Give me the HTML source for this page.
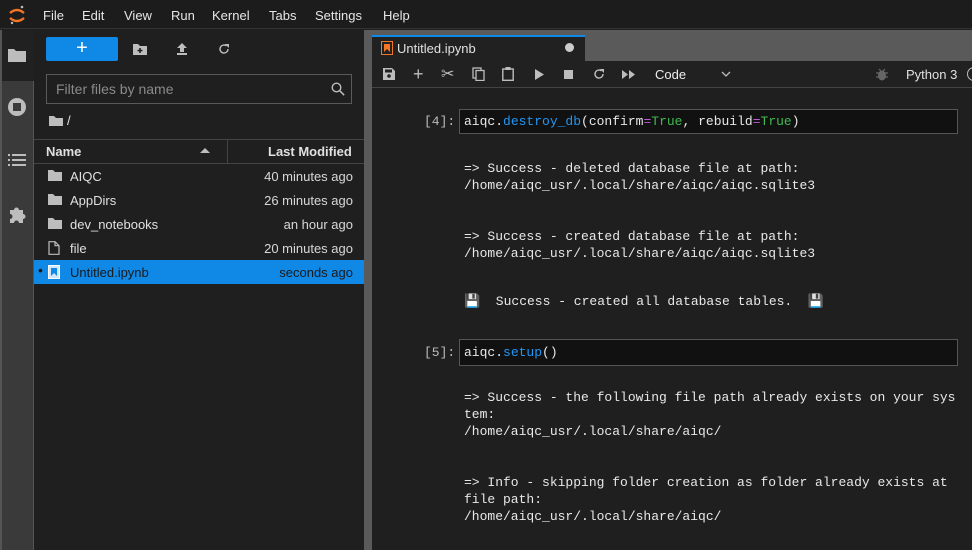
<!DOCTYPE html>
<html><head><style>
*{margin:0;padding:0;box-sizing:border-box}
body{width:972px;height:550px;overflow:hidden;background:#1f1f1f;font-family:"Liberation Sans",sans-serif;color:#e0e0e0;position:relative;font-size:13px}
.a{position:absolute}
.mono{font-family:"Liberation Mono",monospace;font-size:13px;white-space:pre;color:#e8e8e8}
.menu span{position:absolute;top:8px;font-size:13px;color:#e6e6e6}
.row{position:absolute;left:34px;width:330px;height:24px;font-size:13px}
.row .n{position:absolute;left:36px;top:5px}
.row .d{position:absolute;right:11px;top:5px;color:#d8d8d8}
.row svg{position:absolute;left:14px;top:5px}
.kw{color:#2196f3}.g{color:#3fb950}.p{color:#bb5bd6}
</style></head><body>
<!-- menu bar -->
<div class="a" style="left:0;top:0;width:972px;height:29px;background:#1c1c1c;border-bottom:1px solid #333"></div>
<svg class="a" style="left:8px;top:4px" width="18" height="22" viewBox="0 0 18 22"><path d="M2 9 Q9 3 16 9" stroke="#f37626" stroke-width="2.4" fill="none"/><path d="M2 14 Q9 20 16 14" stroke="#f37626" stroke-width="2.4" fill="none"/><circle cx="14" cy="3" r="1.3" fill="#bbb"/><circle cx="4" cy="19" r="1.2" fill="#bbb"/></svg>
<div class="menu"><span style="left:43px">File</span><span style="left:82px">Edit</span><span style="left:124px">View</span><span style="left:171px">Run</span><span style="left:212px">Kernel</span><span style="left:269px">Tabs</span><span style="left:315px">Settings</span><span style="left:383px">Help</span></div>
<!-- left sidebar -->
<div class="a" style="left:0;top:30px;width:34px;height:520px;background:#3a3a3a;border-left:2px solid #555;border-right:1px solid #555"></div>
<div class="a" style="left:2px;top:30px;width:32px;height:51px;background:#212121"></div>
<svg class="a" style="left:8px;top:47px" width="18" height="15"><path d="M0 2h6l2 2h10v11H0z" fill="#bdbdbd"/></svg>
<svg class="a" style="left:7px;top:97px" width="20" height="20"><circle cx="10" cy="10" r="9" fill="#bdbdbd"/><rect x="6" y="6" width="8" height="8" fill="#3a3a3a"/></svg>
<svg class="a" style="left:8px;top:153px" width="18" height="14"><g fill="#bdbdbd"><rect x="0" y="1" width="2" height="2"/><rect x="4" y="1" width="14" height="2"/><rect x="0" y="6" width="2" height="2"/><rect x="4" y="6" width="14" height="2"/><rect x="0" y="11" width="2" height="2"/><rect x="4" y="11" width="14" height="2"/></g></svg>
<svg class="a" style="left:8px;top:205px" width="18" height="18"><path d="M2 5h4a2.5 2.5 0 1 1 5 0h4v4a2.5 2.5 0 1 1 0 5v4H11a2.5 2.5 0 1 0-5 0H2v-4a2.5 2.5 0 1 0 0-5z" fill="#bdbdbd"/></svg>
<!-- file panel -->
<div class="a" style="left:46px;top:37px;width:72px;height:24px;background:#1088e6;border-radius:2px;color:#fff;font-size:20px;text-align:center;line-height:23px">+</div>
<svg class="a" style="left:133px;top:43px" width="14" height="12"><path d="M0 1h5l2 2h7v9H0z" fill="#bdbdbd"/><path d="M7 5v5M4.5 7.5h5" stroke="#1f1f1f" stroke-width="1.6"/></svg>
<svg class="a" style="left:176px;top:43px" width="12" height="12"><path d="M6 0L1 5h3v4h4V5h3z M1 10h10v2H1z" fill="#bdbdbd"/></svg>
<svg class="a" style="left:218px;top:43px" width="12" height="12"><path d="M10 6a4 4 0 1 1-1.5-3.1" stroke="#bdbdbd" stroke-width="1.4" fill="none"/><path d="M7 1h4v4z" fill="#bdbdbd"/></svg>
<div class="a" style="left:46px;top:74px;width:306px;height:30px;border:1px solid #5a5a5a"></div>
<div class="a" style="left:56px;top:81px;font-size:14px;color:#8a8a8a">Filter files by name</div>
<svg class="a" style="left:331px;top:82px" width="14" height="14"><circle cx="5.5" cy="5.5" r="4.3" stroke="#bdbdbd" stroke-width="1.4" fill="none"/><path d="M8.7 8.7l4.5 4.5" stroke="#bdbdbd" stroke-width="1.5"/></svg>
<svg class="a" style="left:49px;top:115px" width="14" height="11"><path d="M0 1h5l2 2h7v8H0z" fill="#bdbdbd"/></svg>
<div class="a" style="left:67px;top:113px;font-size:13px">/</div>
<div class="a" style="left:34px;top:139px;width:330px;height:25px;border-top:1px solid #444;border-bottom:1px solid #444"></div>
<div class="a" style="left:227px;top:139px;width:1px;height:25px;background:#444"></div>
<div class="a" style="left:46px;top:144px;font-weight:bold;font-size:13px">Name</div>
<svg class="a" style="left:200px;top:148px" width="10" height="6"><path d="M0 5L5 0l5 5z" fill="#bdbdbd"/></svg>
<div class="a" style="left:268px;top:144px;font-weight:bold;font-size:13px">Last Modified</div>
<div class="row" style="top:164px"><svg width="14" height="12"><path d="M0 1h5l2 2h7v9H0z" fill="#bdbdbd"/></svg><span class="n">AIQC</span><span class="d">40 minutes ago</span></div>
<div class="row" style="top:188px"><svg width="14" height="12"><path d="M0 1h5l2 2h7v9H0z" fill="#bdbdbd"/></svg><span class="n">AppDirs</span><span class="d">26 minutes ago</span></div>
<div class="row" style="top:212px"><svg width="14" height="12"><path d="M0 1h5l2 2h7v9H0z" fill="#bdbdbd"/></svg><span class="n">dev_notebooks</span><span class="d">an hour ago</span></div>
<div class="row" style="top:236px"><svg width="12" height="14"><path d="M1 .7h6l4 4v8.6H1z M7 .7v4h4" stroke="#bdbdbd" stroke-width="1.2" fill="none"/></svg><span class="n">file</span><span class="d">20 minutes ago</span></div>
<div class="row" style="top:260px;background:#1088e6;color:#1a1a1a"><span class="a" style="left:4px;top:2px;font-size:14px">•</span><svg width="12" height="14"><rect x=".5" y=".5" width="11" height="13" fill="#cfe6fb" stroke="#fff"/><path d="M3 3h6v8L6 8l-3 3z" fill="#1088e6"/></svg><span class="n">Untitled.ipynb</span><span class="d" style="color:#1a1a1a">seconds ago</span></div>
<!-- splitter -->
<div class="a" style="left:364px;top:30px;width:8px;height:520px;background:#5a5a5a"></div>
<!-- tab bar -->
<div class="a" style="left:372px;top:30px;width:600px;height:31px;background:#5a5a5a"></div>
<div class="a" style="left:372px;top:35px;width:213px;height:27px;background:#212121;border-top:2px solid #1088e6"></div>
<svg class="a" style="left:381px;top:41px" width="12" height="14"><rect x=".5" y=".5" width="11" height="13" fill="none" stroke="#f37626"/><path d="M3 3h6v8L6 8l-3 3z" fill="#f37626"/></svg>
<div class="a" style="left:397px;top:41px;font-size:13px">Untitled.ipynb</div>
<div class="a" style="left:565px;top:43px;width:9px;height:9px;border-radius:50%;background:#ccc"></div>
<!-- toolbar -->
<div class="a" style="left:372px;top:61px;width:600px;height:27px;background:#212121;border-bottom:1px solid #444"></div>
<svg class="a" style="left:383px;top:68px" width="12" height="12"><path d="M0 0h9l3 3v9H0z" fill="#bdbdbd"/><rect x="2" y="1.5" width="7" height="3" fill="#212121"/><circle cx="6" cy="8" r="1.8" fill="#212121"/></svg>
<div class="a" style="left:413px;top:64px;font-size:18px;color:#bdbdbd">+</div>
<div class="a" style="left:441px;top:64px;font-size:16px;color:#bdbdbd">✂</div>
<svg class="a" style="left:472px;top:67px" width="13" height="14"><rect x="1" y="1" width="8" height="10" fill="none" stroke="#bdbdbd" stroke-width="1.3"/><rect x="4" y="3.5" width="8" height="10" fill="#212121" stroke="#bdbdbd" stroke-width="1.3"/></svg>
<svg class="a" style="left:502px;top:67px" width="12" height="14"><rect x=".8" y="2" width="10.4" height="11.3" fill="none" stroke="#bdbdbd" stroke-width="1.4"/><rect x="3.5" y="0" width="5" height="3" fill="#bdbdbd"/></svg>
<svg class="a" style="left:535px;top:69px" width="9" height="11"><path d="M0 0l9 5.5L0 11z" fill="#bdbdbd"/></svg>
<div class="a" style="left:564px;top:70px;width:9px;height:9px;background:#bdbdbd"></div>
<svg class="a" style="left:593px;top:68px" width="12" height="12"><path d="M10 6a4 4 0 1 1-1.5-3.1" stroke="#bdbdbd" stroke-width="1.4" fill="none"/><path d="M7 1h4v4z" fill="#bdbdbd"/></svg>
<svg class="a" style="left:622px;top:70px" width="13" height="9"><path d="M0 0l6 4.5L0 9zM7 0l6 4.5L7 9z" fill="#bdbdbd"/></svg>
<div class="a" style="left:655px;top:67px;font-size:13px;color:#eee">Code</div>
<svg class="a" style="left:721px;top:71px" width="10" height="6"><path d="M1 1l4 4 4-4" stroke="#bdbdbd" stroke-width="1.3" fill="none"/></svg>
<svg class="a" style="left:876px;top:68px" width="12" height="13"><ellipse cx="6" cy="7.5" rx="4" ry="5" fill="#666"/><path d="M0 5h12M0 9h12M3 1l2 2M9 1L7 3" stroke="#666" stroke-width="1.2"/></svg>
<div class="a" style="left:906px;top:67px;font-size:13px">Python 3</div>
<div class="a" style="left:967px;top:67px;width:14px;height:14px;border:1.5px solid #bbb;border-radius:50%"></div>
<!-- notebook -->
<div class="a mono" style="left:424px;top:114px;color:#bbb">[4]:</div>
<div class="a" style="left:459px;top:109px;width:499px;height:25px;background:#111;border:1px solid #555"></div>
<div class="a mono" style="left:464px;top:114px">aiqc.<span class="kw">destroy_db</span>(confirm<span class="p">=</span><span class="g">True</span>, rebuild<span class="p">=</span><span class="g">True</span>)</div>
<div class="a mono" style="left:464px;top:160px;line-height:17px">=&gt; Success - deleted database file at path:
/home/aiqc_usr/.local/share/aiqc/aiqc.sqlite3


=&gt; Success - created database file at path:
/home/aiqc_usr/.local/share/aiqc/aiqc.sqlite3</div>
<div class="a mono" style="left:464px;top:294px">💾  Success - created all database tables.  💾</div>
<div class="a mono" style="left:424px;top:345px;color:#bbb">[5]:</div>
<div class="a" style="left:459px;top:339px;width:499px;height:27px;background:#111;border:1px solid #555"></div>
<div class="a mono" style="left:464px;top:345px">aiqc.<span class="kw">setup</span>()</div>
<div class="a mono" style="left:464px;top:389px;line-height:17px">=&gt; Success - the following file path already exists on your sys
tem:
/home/aiqc_usr/.local/share/aiqc/


=&gt; Info - skipping folder creation as folder already exists at
file path:
/home/aiqc_usr/.local/share/aiqc/</div>
</body></html>
